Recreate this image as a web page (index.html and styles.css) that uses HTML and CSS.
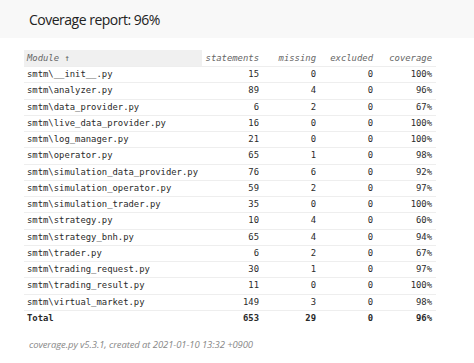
FILE: index.html
```html
<!DOCTYPE html>
<html>
<head>
<meta charset="utf-8">
<link rel="stylesheet" href="styles.css">
</head>
<body>
<header class="top">
  <h1 class="title">Coverage report: 96%</h1>
</header>
<main class="content">
  <table class="report">
    <thead>
      <tr>
        <th class="name sorted">Module ↑</th>
        <th class="num c-st">statements</th>
        <th class="num c-mi">missing</th>
        <th class="num c-ex">excluded</th>
        <th class="num c-co">coverage</th>
      </tr>
    </thead>
    <tbody>
      <tr><td class="name">smtm\__init__.py</td><td class="num">15</td><td class="num">0</td><td class="num">0</td><td class="num">100%</td></tr>
      <tr><td class="name">smtm\analyzer.py</td><td class="num">89</td><td class="num">4</td><td class="num">0</td><td class="num">96%</td></tr>
      <tr><td class="name">smtm\data_provider.py</td><td class="num">6</td><td class="num">2</td><td class="num">0</td><td class="num">67%</td></tr>
      <tr><td class="name">smtm\live_data_provider.py</td><td class="num">16</td><td class="num">0</td><td class="num">0</td><td class="num">100%</td></tr>
      <tr><td class="name">smtm\log_manager.py</td><td class="num">21</td><td class="num">0</td><td class="num">0</td><td class="num">100%</td></tr>
      <tr><td class="name">smtm\operator.py</td><td class="num">65</td><td class="num">1</td><td class="num">0</td><td class="num">98%</td></tr>
      <tr><td class="name">smtm\simulation_data_provider.py</td><td class="num">76</td><td class="num">6</td><td class="num">0</td><td class="num">92%</td></tr>
      <tr><td class="name">smtm\simulation_operator.py</td><td class="num">59</td><td class="num">2</td><td class="num">0</td><td class="num">97%</td></tr>
      <tr><td class="name">smtm\simulation_trader.py</td><td class="num">35</td><td class="num">0</td><td class="num">0</td><td class="num">100%</td></tr>
      <tr><td class="name">smtm\strategy.py</td><td class="num">10</td><td class="num">4</td><td class="num">0</td><td class="num">60%</td></tr>
      <tr><td class="name">smtm\strategy_bnh.py</td><td class="num">65</td><td class="num">4</td><td class="num">0</td><td class="num">94%</td></tr>
      <tr><td class="name">smtm\trader.py</td><td class="num">6</td><td class="num">2</td><td class="num">0</td><td class="num">67%</td></tr>
      <tr><td class="name">smtm\trading_request.py</td><td class="num">30</td><td class="num">1</td><td class="num">0</td><td class="num">97%</td></tr>
      <tr><td class="name">smtm\trading_result.py</td><td class="num">11</td><td class="num">0</td><td class="num">0</td><td class="num">100%</td></tr>
      <tr><td class="name">smtm\virtual_market.py</td><td class="num">149</td><td class="num">3</td><td class="num">0</td><td class="num">98%</td></tr>
    </tbody>
    <tfoot>
      <tr class="total"><td class="name">Total</td><td class="num">653</td><td class="num">29</td><td class="num">0</td><td class="num">96%</td></tr>
    </tfoot>
  </table>
  <p class="footer">coverage.py v5.3.1, created at 2021-01-10 13:32 +0900</p>
</main>
</body>
</html>
```
FILE: styles.css
```css
html, body {
  margin: 0;
  padding: 0;
  background: #fff;
}
body {
  font-family: "Open Sans", "Noto Sans", sans-serif;
  color: #000;
}
.top {
  background: #f8f8f8;
  height: 38px;
  padding-left: 29px;
  display: flex;
  align-items: center;
}
.title {
  margin: 0;
  font-size: 14px;
  font-weight: 400;
  letter-spacing: -0.5px;
  color: #222;
}
.content {
  padding: 12px 0 0 24px;
}
.report {
  border-collapse: collapse;
  width: 412px;
  table-layout: fixed;
  font-family: "DejaVu Sans Mono", "Liberation Mono", monospace;
  font-size: 8.9px;
  color: #2a2a2a;
}
.report th,
.report td {
  height: 15.25px;
  padding: 0 4px 0 3px;
  line-height: 15px;
  white-space: nowrap;
}
.report th {
  font-weight: 400;
  font-style: italic;
  color: #666;
  height: 16px;
  text-align: right;
}
.report th.name {
  text-align: left;
  width: 171px;
}
.report th.sorted {
  background: #f0f0f0;
}
.report th.c-st { width: 54px; }
.report th.c-mi { width: 50px; }
.report th.c-ex { width: 50px; }
.report th.c-co { width: 52px; }
.report td.name { text-align: left; }
.report td.num { text-align: right; }
.report tbody tr {
  border-top: 1px solid #eee;
}
.report tfoot tr {
  border-top: 1px solid #eee;
}
.report .total td {
  font-weight: 700;
}
.footer {
  margin: 12px 0 0 5px;
  font-size: 9.5px;
  letter-spacing: -0.1px;
  font-style: italic;
  color: #888;
}
```
